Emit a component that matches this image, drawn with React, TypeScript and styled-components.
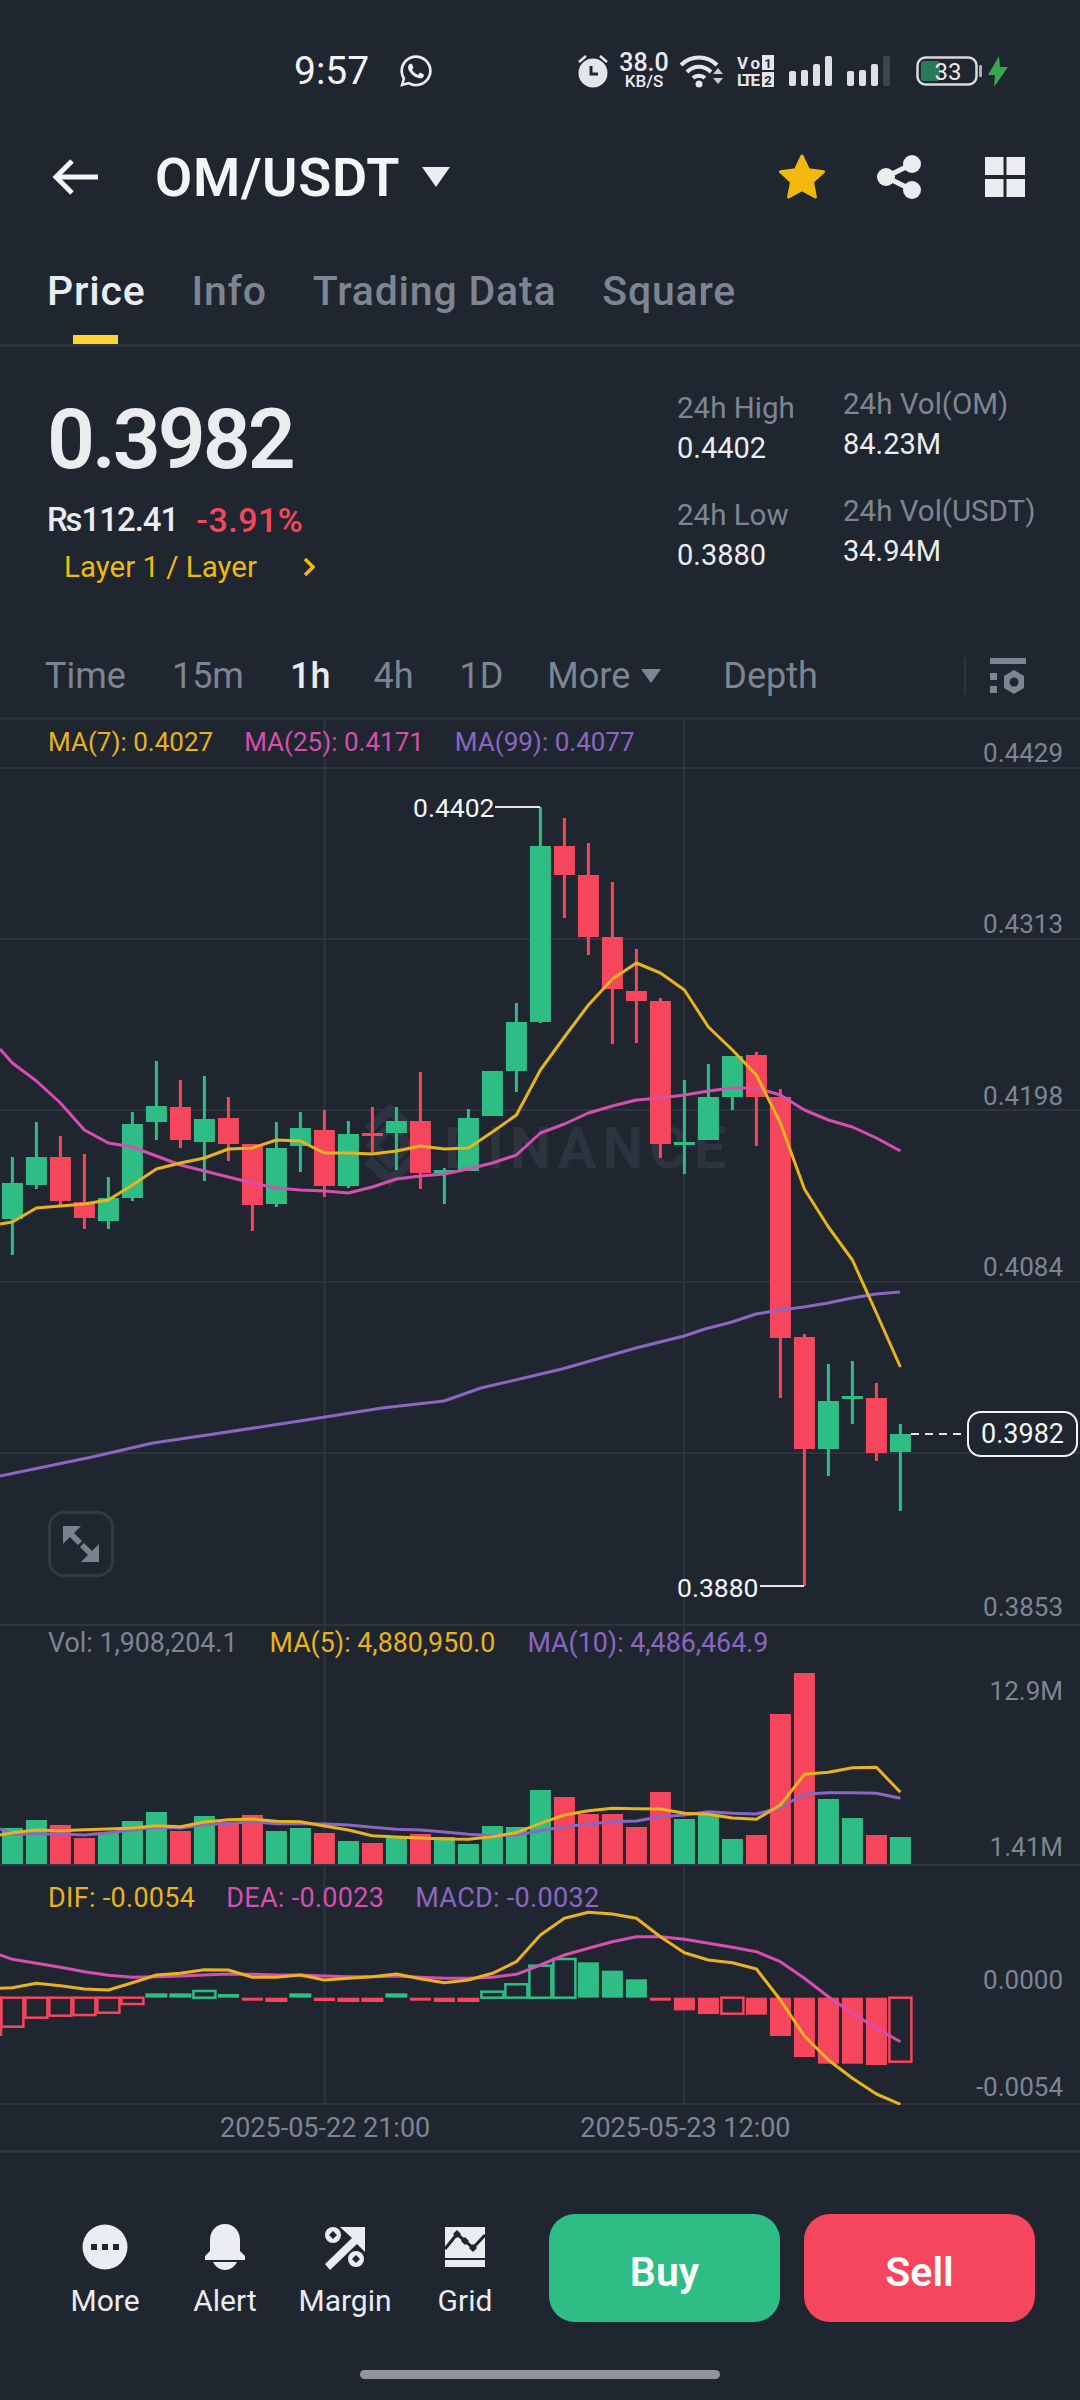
import * as React from 'react';
import styled, { createGlobalStyle } from 'styled-components';
import { FaWhatsapp } from 'react-icons/fa';

const BG = '#1f2630';
const GRID = '#2d3440';
const MUTED = '#7e8592';
const LIGHT = '#eaecef';
const GREEN = '#2ebd85';
const RED = '#f6465d';
const GOLD = '#f0b90b';
const YELLOW = '#e9b31c';
const PINK = '#d64fae';
const PURPLE = '#8b66c2';

const centerX = (i: number) => 12.4 + 24 * i;

type Candle = [number, number, number, number, 'g' | 'r'];

// high, body top, body bottom, low (page y)
const candles: Candle[] = [
  [1157, 1183, 1219, 1255, 'g'], [1122, 1157, 1185, 1189, 'g'], [1136, 1157, 1201, 1205, 'r'], [1154, 1202, 1218, 1229, 'r'],
  [1177, 1198, 1221, 1229, 'g'], [1112, 1124, 1198, 1201, 'g'], [1061, 1106, 1122, 1140, 'g'], [1080, 1107, 1140, 1148, 'r'],
  [1076, 1119, 1142, 1181, 'g'], [1097, 1118, 1144, 1161, 'r'], [1144, 1144, 1205, 1231, 'r'], [1122, 1148, 1204, 1207, 'g'],
  [1112, 1128, 1146, 1172, 'g'], [1110, 1130, 1186, 1197, 'r'], [1121, 1134, 1186, 1188, 'g'], [1107, 1133, 1136, 1154, 'r'],
  [1107, 1121, 1133, 1170, 'g'], [1072, 1121, 1173, 1189, 'r'], [1168, 1170, 1173, 1204, 'g'], [1109, 1118, 1171, 1171, 'g'],
  [1071, 1071, 1116, 1116, 'g'], [1003, 1022, 1071, 1092, 'g'], [807, 846, 1022, 1023, 'g'], [818, 846, 875, 918, 'r'],
  [843, 875, 937, 955, 'r'], [882, 937, 989, 1044, 'r'], [949, 991, 1001, 1043, 'r'], [998, 1001, 1144, 1158, 'r'],
  [1080, 1142, 1145, 1174, 'g'], [1064, 1097, 1140, 1140, 'g'], [1056, 1056, 1097, 1110, 'g'], [1052, 1055, 1097, 1146, 'r'],
  [1089, 1097, 1338, 1398, 'r'], [1334, 1337, 1449, 1586, 'r'], [1364, 1401, 1449, 1476, 'g'], [1361, 1396, 1399, 1424, 'g'],
  [1383, 1398, 1453, 1461, 'r'], [1424, 1434, 1452, 1511, 'g'],
];

const series = (first: number, ys: number[]) =>
  [`0,${first}`, ...ys.map((y, i) => `${centerX(i)},${y}`)].join(' ');

const ma7 = series(1224, [
  1222, 1208, 1206, 1204, 1200, 1185, 1169, 1163, 1158, 1149, 1148, 1140, 1141, 1153, 1153, 1154, 1151, 1146, 1149, 1148,
  1132, 1115, 1070, 1037, 1005, 979, 963, 973, 990, 1027, 1050, 1075, 1123, 1189, 1227, 1260, 1313, 1367,
]);
const ma25 = series(1049, [
  1063, 1081, 1103, 1130, 1143, 1147, 1156, 1165, 1171, 1177, 1183, 1188, 1190, 1191, 1193, 1187, 1179, 1176, 1174, 1169,
  1163, 1155, 1133, 1124, 1113, 1106, 1100, 1098, 1095, 1091, 1088, 1088, 1095, 1110, 1120, 1127, 1138, 1151,
]);
const ma99 =
  '0,1476 92,1457 153,1443 214,1434 306,1420 382,1408 444,1401 481,1388 562,1369 636,1348 684,1336 705,1329 732,1322 ' +
  '756,1314 780,1310 804,1307 828,1303 852,1298 876,1294 900,1292';

const lowerY = (z: number) => +(1620 + z / 3).toFixed(1);

const volume: [number, 'g' | 'r'][] = [
  [1828, 'g'], [1820, 'g'], [1825, 'r'], [1838, 'r'], [1833, 'g'], [1821, 'g'], [1812, 'g'], [1831, 'r'], [1816, 'g'], [1822, 'r'],
  [1815, 'r'], [1831, 'g'], [1828, 'g'], [1833, 'r'], [1841, 'g'], [1843, 'r'], [1837, 'g'], [1834, 'r'], [1837, 'g'], [1844, 'g'],
  [1826, 'g'], [1827, 'g'], [1790, 'g'], [1797, 'r'], [1814, 'r'], [1814, 'r'], [1827, 'r'], [1792, 'r'], [1819, 'g'], [1815, 'g'],
  [1839, 'g'], [1835, 'r'], [1714, 'r'], [1673, 'r'], [1799, 'g'], [1818, 'g'], [1835, 'r'], [1837, 'g'],
];

const volMa5 = series(lowerY(645), [
  638, 630, 632, 629, 627, 624, 617, 620, 606, 599, 597, 604, 605, 618, 630, 647, 651, 654, 657, 658, 650, 638, 610, 585, 572,
  565, 566, 567, 580, 583, 594, 598, 555, 463, 457, 443, 442, 517,
].map(lowerY));
const volMa10 = series(lowerY(627), [
  642, 642, 642, 645, 638, 630, 622, 624, 614, 610, 606, 611, 611, 612, 615, 622, 628, 630, 636, 643, 647, 645, 632, 620, 612,
  605, 603, 590, 585, 575, 580, 582, 562, 523, 518, 518, 520, 535,
].map(lowerY));

const ZERO = 1133;
// bar end (crop units), look: f = thin fill, w = wide fill, h = hollow
const macdBars: [number, 'f' | 'w' | 'h'][] = [
  [1220, 'h'], [1193, 'h'], [1187, 'h'], [1185, 'h'], [1178, 'h'], [1152, 'h'], [1120, 'w'], [1120, 'w'], [1113, 'h'], [1122, 'f'],
  [1141, 'f'], [1146, 'w'], [1120, 'w'], [1143, 'f'], [1146, 'w'], [1146, 'w'], [1120, 'w'], [1142, 'f'], [1146, 'f'], [1146, 'w'],
  [1115, 'h'], [1093, 'h'], [1037, 'h'], [1017, 'h'], [1027, 'f'], [1052, 'f'], [1078, 'f'], [1141, 'f'], [1171, 'f'], [1182, 'f'],
  [1181, 'h'], [1184, 'f'], [1248, 'f'], [1311, 'f'], [1331, 'f'], [1331, 'f'], [1335, 'f'], [1325, 'h'],
];
const dif = series(lowerY(1105), [
  1103, 1090, 1097, 1107, 1110, 1088, 1065, 1060, 1049, 1050, 1072, 1072, 1065, 1080, 1075, 1070, 1062, 1076, 1088, 1080, 1060,
  1025, 945, 895, 877, 882, 895, 950, 998, 1020, 1028, 1047, 1140, 1248, 1320, 1375, 1422, 1453,
].map(lowerY));
const dea = series(lowerY(1005), [
  1018, 1030, 1042, 1055, 1066, 1072, 1070, 1068, 1065, 1062, 1063, 1065, 1065, 1068, 1070, 1070, 1068, 1072, 1075, 1075, 1072,
  1063, 1035, 1005, 985, 965, 950, 950, 958, 970, 982, 995, 1025, 1075, 1130, 1180, 1225, 1265,
].map(lowerY));

const GlobalStyle = createGlobalStyle`
  html, body {
    margin: 0;
    background: ${BG};
  }
  * {
    box-sizing: border-box;
  }
`;

const Page = styled.div`
  position: relative;
  width: 1080px;
  height: 2400px;
  overflow: hidden;
  background: ${BG};
  color: ${LIGHT};
  font-family: Roboto, 'DejaVu Sans', sans-serif;
`;

const StatusBar = styled.div`
  display: flex;
  align-items: center;
  height: 110px;
  padding: 32px 0 0 294px;
`;

const Clock = styled.span`
  width: 104px;
  font-size: 39px;
  color: #f4f5f6;
`;

const StatusIcons = styled.div`
  display: flex;
  align-items: center;
  margin-left: 143px;
`;

const NetSpeed = styled.div`
  display: flex;
  flex-direction: column;
  align-items: center;
  width: 50px;
  margin: 0 10px 0 10px;
  font-weight: 500;
  color: #e9eaed;
  strong {
    font-size: 25px;
    line-height: 21px;
    font-weight: 500;
  }
  span {
    font-size: 17px;
    line-height: 17px;
  }
`;

const Header = styled.header`
  display: flex;
  align-items: center;
  height: 134px;
  padding: 0 55px 0 52px;
`;

const Title = styled.h1`
  margin: 0 22px 0 57px;
  font-size: 54px;
  letter-spacing: 0.7px;
  font-weight: 600;
  color: #f4f5f6;
`;

const Caret = styled.i<{ $size: number; $color: string }>`
  display: block;
  width: 0;
  height: 0;
  border-style: solid;
  border-width: ${(p) => p.$size * 1.45}px ${(p) => p.$size}px 0;
  border-color: ${(p) => p.$color} transparent transparent;
`;

const HeaderActions = styled.div`
  display: flex;
  align-items: center;
  gap: 51px;
  margin-left: auto;
`;

const LayoutSlot = styled.div`
  display: flex;
  margin-left: 12px;
`;

const Tabs = styled.nav`
  display: flex;
  gap: 46px;
  height: 103px;
  padding: 24px 0 0 47px;
  border-bottom: 3px solid ${GRID};
`;

const Tab = styled.span<{ $active?: boolean }>`
  position: relative;
  height: 46px;
  font-size: 41px;
  letter-spacing: 0.8px;
  line-height: 46px;
  font-weight: 500;
  color: ${(p) => (p.$active ? LIGHT : MUTED)};
  ${(p) =>
    p.$active &&
    `&::after {
      content: '';
      position: absolute;
      left: 50%;
      top: 67px;
      width: 45px;
      height: 9px;
      margin-left: -23px;
      background: #fcd535;
    }`}
`;

const Ticker = styled.section`
  display: flex;
  height: 293px;
`;

const PriceBlock = styled.div`
  width: 677px;
  padding: 48px 0 0 47px;
`;

const LastPrice = styled.div`
  font-size: 84px;
  letter-spacing: -3px;
  line-height: 90px;
  font-weight: 600;
  color: ${LIGHT};
`;

const SubPrice = styled.div`
  display: flex;
  gap: 18px;
  margin-top: 13px;
  font-size: 33px;
  letter-spacing: -1px;
  line-height: 44px;
  font-weight: 500;
`;

const Change = styled.span`
  font-size: 34px;
  letter-spacing: 0.5px;
  color: ${RED};
`;

const Sector = styled.div`
  display: flex;
  align-items: center;
  gap: 46px;
  margin: 5px 0 0 17px;
  font-size: 29.5px;
  line-height: 40px;
  color: ${GOLD};
`;

const StatColumn = styled.div<{ $top: number; $width: number }>`
  width: ${(p) => p.$width}px;
  padding-top: ${(p) => p.$top}px;
`;

const StatLabel = styled.div`
  font-size: 29.5px;
  line-height: 40px;
  white-space: nowrap;
  color: ${MUTED};
`;

const StatValue = styled.div`
  margin: 1px 0 28px;
  font-size: 29px;
  line-height: 38px;
  color: ${LIGHT};
`;

const Intervals = styled.div`
  display: flex;
  align-items: center;
  height: 80px;
  padding: 0 0 6px 45px;
  border-bottom: 3px solid #2a313c;
`;

const Interval = styled.span<{ $active?: boolean; $gap: number; $lead?: number }>`
  margin: 0 ${(p) => p.$gap}px 0 ${(p) => p.$lead ?? 0}px;
  font-size: 36px;
  font-weight: ${(p) => (p.$active ? 500 : 400)};
  color: ${(p) => (p.$active ? LIGHT : MUTED)};
`;

const SettingsSlot = styled.div`
  display: flex;
  align-items: center;
  gap: 24px;
  margin-left: auto;
  padding-right: 54px;
  &::before {
    content: '';
    width: 2px;
    height: 36px;
    background: ${GRID};
  }
`;

const Pane = styled.div<{ $height: number }>`
  position: relative;
  height: ${(p) => p.$height}px;
  svg {
    display: block;
  }
`;

const Legend = styled.div<{ $top: number; $gap: number; $size: number; $tracking?: number }>`
  position: absolute;
  top: ${(p) => p.$top}px;
  left: 48px;
  display: flex;
  gap: ${(p) => p.$gap}px;
  font-size: ${(p) => p.$size}px;
  letter-spacing: ${(p) => p.$tracking ?? 0}px;
  line-height: 30px;
  white-space: nowrap;
`;

const LegendItem = styled.span<{ $color: string }>`
  color: ${(p) => p.$color};
`;

const PriceTag = styled.div`
  position: absolute;
  left: 967px;
  top: 691px;
  width: 111px;
  height: 46px;
  border: 2px solid #f1f2f4;
  border-radius: 14px;
  background: ${BG};
  font-size: 27px;
  line-height: 42px;
  text-align: center;
  color: #f4f5f6;
`;

const ExpandButton = styled.div`
  position: absolute;
  left: 48px;
  top: 791px;
  display: flex;
  align-items: center;
  justify-content: center;
  width: 66px;
  height: 66px;
  border: 3px solid #323945;
  border-radius: 16px;
`;

const DateAxis = styled.div`
  display: flex;
  gap: 150px;
  height: 48px;
  padding: 6px 0 0 220px;
  border-bottom: 3px solid ${GRID};
  font-size: 27px;
  line-height: 34px;
  color: ${MUTED};
`;

const Footer = styled.footer`
  display: flex;
  flex-direction: column;
  align-items: center;
  height: 247px;
  padding-top: 61px;
`;

const Toolbar = styled.div`
  display: flex;
  align-self: stretch;
  height: 108px;
  padding-left: 45px;
`;

const Tool = styled.div`
  display: flex;
  flex-direction: column;
  align-items: center;
  width: 120px;
  padding-top: 10px;
  font-size: 30px;
  line-height: 40px;
  color: ${LIGHT};
  svg {
    display: block;
    height: 46px;
    margin-bottom: 11px;
  }
`;

const TradeButton = styled.div<{ $color: string }>`
  display: flex;
  align-items: center;
  justify-content: center;
  width: 231px;
  margin-left: 24px;
  padding-top: 7px;
  border-radius: 26px;
  background: ${(p) => p.$color};
  font-size: 41px;
  font-weight: 600;
  color: #fff;
`;

const HomePill = styled.div`
  width: 360px;
  height: 9px;
  margin-top: 48px;
  border-radius: 5px;
  background: #91949c;
`;

const PriceLine = ({ points, color }: { points: string; color: string }) => (
  <polyline points={points} fill="none" stroke={color} strokeWidth={3} strokeLinejoin="round" />
);

const AxisLabel = ({ y, children }: { y: number; children: string }) => (
  <text x={1063} y={y + 9} textAnchor="end" fontFamily="Roboto, sans-serif" fontSize={26} fill={MUTED}>
    {children}
  </text>
);

const GridLines = ({ top, bottom, rows }: { top: number; bottom: number; rows: number[] }) => (
  <g fill={GRID}>
    {rows.map((y) => (
      <rect key={y} x={0} y={y - 1} width={1080} height={2} />
    ))}
    <rect x={323.5} y={top} width={2} height={bottom - top} />
    <rect x={683} y={top} width={2} height={bottom - top} />
  </g>
);

const Watermark = () => (
  <g fill="#2d333f">
    <g fill="none" stroke="#2d333f" strokeWidth={10}>
      <path d="M372 1145l18 -18 18 18 -18 18z" />
      <path d="M368 1130l22 -20 22 20" />
      <path d="M368 1160l22 20 22 -20" />
    </g>
    <text x={444} y={1168} fontFamily="Roboto, sans-serif" fontWeight={700} fontSize={58} textLength={282}>
      BINANCE
    </text>
  </g>
);

const Candles = () => (
  <g>
    {candles.map(([high, top, bottom, low, dir], i) => {
      const color = dir === 'g' ? GREEN : RED;
      const x = centerX(i);
      return (
        <g key={i} fill={color}>
          <rect x={x - 1.5} y={high} width={3} height={low - high} />
          <rect x={x - 10.5} y={top} width={21} height={bottom - top} />
        </g>
      );
    })}
  </g>
);

const PriceChart = () => (
  <svg width={1080} height={906} viewBox="0 720 1080 906">
    <Watermark />
    <GridLines top={720} bottom={1626} rows={[768, 939, 1110, 1282, 1453, 1625]} />
    <Candles />
    <PriceLine points={ma99} color={PURPLE} />
    <PriceLine points={ma25} color={PINK} />
    <PriceLine points={ma7} color={YELLOW} />
    <AxisLabel y={753}>0.4429</AxisLabel>
    <AxisLabel y={924}>0.4313</AxisLabel>
    <AxisLabel y={1096}>0.4198</AxisLabel>
    <AxisLabel y={1267}>0.4084</AxisLabel>
    <AxisLabel y={1607}>0.3853</AxisLabel>
    <g fontFamily="Roboto, sans-serif" fontSize={26.5} fill="#f4f5f6">
      <text x={413} y={817}>0.4402</text>
      <text x={677} y={1597}>0.3880</text>
    </g>
    <g stroke="#e4e6ea" strokeWidth={2} fill="none">
      <path d="M495 807H540" />
      <path d="M760 1586H804" />
      <path d="M911 1434H965" strokeDasharray="8 6" />
    </g>
  </svg>
);

const VolumeChart = () => (
  <svg width={1080} height={240} viewBox="0 1626 1080 240">
    <GridLines top={1626} bottom={1866} rows={[1865]} />
    {volume.map(([top, dir], i) => (
      <rect key={i} x={centerX(i) - 10.5} y={top} width={21} height={1864 - top} fill={dir === 'g' ? GREEN : RED} />
    ))}
    <PriceLine points={volMa10} color={PURPLE} />
    <PriceLine points={volMa5} color={YELLOW} />
    <AxisLabel y={1691}>12.9M</AxisLabel>
    <AxisLabel y={1847}>1.41M</AxisLabel>
  </svg>
);

const MacdChart = () => (
  <svg width={1080} height={239} viewBox="0 1866 1080 239">
    <GridLines top={1866} bottom={2105} rows={[2104]} />
    {macdBars.map(([end, look], i) => {
      const color = end < ZERO ? GREEN : RED;
      const y = lowerY(Math.min(end, ZERO));
      const h = Math.abs(end - ZERO) / 3;
      const w = look === 'f' ? 21 : 22;
      return look === 'h' ? (
        <rect key={i} x={centerX(i) - 11} y={y} width={w} height={Math.max(h, 3)} fill="none" stroke={color} strokeWidth={2.5} />
      ) : (
        <rect key={i} x={centerX(i) - w / 2} y={y} width={w} height={Math.max(h, 3)} fill={color} />
      );
    })}
    <rect x={-10} y={lowerY(ZERO)} width={11} height={37} fill="none" stroke={RED} strokeWidth={2.5} />
    <PriceLine points={dea} color={PINK} />
    <PriceLine points={dif} color={YELLOW} />
    <AxisLabel y={1980}>0.0000</AxisLabel>
    <AxisLabel y={2087}>-0.0054</AxisLabel>
  </svg>
);

const AlarmIcon = () => (
  <svg width={32} height={34} viewBox="0 0 32 34">
    <circle cx={16} cy={19} r={14.5} fill="#e4e5e8" />
    <path d="M14 12v8h7" fill="none" stroke={BG} strokeWidth={3} />
    <path d="M2 8l7-6M30 8l-7-6" stroke="#e4e5e8" strokeWidth={2.5} />
  </svg>
);

const WifiIcon = () => (
  <svg width={46} height={34} viewBox="0 0 46 34">
    <g fill="none" stroke="#e4e5e8" strokeWidth={4}>
      <path d="M2 11C12 1 28 1 38 11" />
      <path d="M8 18C15 11 25 11 32 18" />
      <path d="M14 24C17 21 23 21 26 24" />
    </g>
    <circle cx={20} cy={30} r={3.5} fill="#e4e5e8" />
    <path d="M34 20l5-6 5 6zM34 24l5 6 5-6z" fill="#c9cbd0" />
  </svg>
);

const VolteIcon = () => (
  <svg width={37} height={38} viewBox="0 -3 37 38" style={{ marginLeft: 12 }}>
    <g fontFamily="Roboto, sans-serif" fontWeight={700} fontSize={17} fill="#e4e5e8">
      <text x={0} y={14} textLength={23}>Vo</text>
      <text x={0} y={31} textLength={23}>LTE</text>
    </g>
    <rect x={25} y={0} width={12} height={15} fill="#e4e5e8" />
    <rect x={25} y={17} width={12} height={15} fill="#e4e5e8" />
    <g fontFamily="Roboto, sans-serif" fontWeight={700} fontSize={13} fill={BG} textAnchor="middle">
      <text x={31} y={13}>1</text>
      <text x={31} y={30}>2</text>
    </g>
  </svg>
);

const SignalIcon = ({ dim }: { dim?: boolean }) => (
  <svg width={43} height={30} viewBox="0 0 43 30" style={{ marginLeft: 15 }}>
    {[15, 16, 22, 30].map((h, i) => (
      <rect key={i} x={i * 12} y={30 - h} width={7} height={h} rx={2} fill={dim && i === 3 ? '#3d4450' : '#dfe0e3'} />
    ))}
  </svg>
);

const BatteryIcon = () => (
  <svg width={66} height={30} viewBox="0 0 66 30" style={{ marginLeft: 26 }}>
    <rect x={1.5} y={1.5} width={59} height={27} rx={8} fill="none" stroke="#d8dade" strokeWidth={2.5} />
    <rect x={5} y={5} width={19} height={20} rx={3} fill="#2b7a57" />
    <rect x={63} y={9} width={3} height={12} rx={1} fill="#a9acb2" />
    <text x={32} y={24} textAnchor="middle" fontFamily="Roboto, sans-serif" fontSize={24} fill="#e8e9ec">33</text>
  </svg>
);

const BoltIcon = () => (
  <svg width={20} height={31} viewBox="0 0 20 31" style={{ marginLeft: 6 }}>
    <path d="M11 0L0 19h7l-1 12L20 11h-8z" fill="#36a852" />
  </svg>
);

const BackIcon = () => (
  <svg width={46} height={36} viewBox="0 0 46 36" fill="none" stroke="#f4f5f6" strokeWidth={5}>
    <path d="M46 18H5" />
    <path d="M20 2L4 18l16 16" />
  </svg>
);

const StarIcon = () => (
  <svg width={46} height={46} viewBox="0 0 46 46">
    <path
      d="M23 2l6.6 13.8 14.9 1.9-11 10.3 2.9 15L23 35.6 9.6 43l2.9-15-11-10.3 14.9-1.9z"
      fill={GOLD}
      stroke={GOLD}
      strokeWidth={3}
      strokeLinejoin="round"
    />
  </svg>
);

const ShareIcon = () => (
  <svg width={46} height={46} viewBox="0 0 46 46" fill={LIGHT} stroke={LIGHT}>
    <path d="M36 10L10 23l26 13" fill="none" strokeWidth={5} />
    <circle cx={36} cy={10} r={9} stroke="none" />
    <circle cx={10} cy={23} r={9} stroke="none" />
    <circle cx={36} cy={36} r={9} stroke="none" />
  </svg>
);

const LayoutIcon = () => (
  <svg width={40} height={40} viewBox="0 0 40 40" fill={LIGHT}>
    <rect width={18.5} height={18} />
    <rect x={21.5} width={18.5} height={18} />
    <rect y={22} width={18.5} height={18} />
    <rect x={21.5} y={22} width={18.5} height={18} />
  </svg>
);

const ChevronIcon = () => (
  <svg width={12} height={18} viewBox="0 0 12 18" fill="none" stroke={GOLD} strokeWidth={3.5}>
    <path d="M2 1l8 8-8 8" />
  </svg>
);

const ChartSettingsIcon = () => (
  <svg width={36} height={36} viewBox="0 0 36 36" fill={MUTED}>
    <rect width={36} height={6} />
    <rect y={15} width={7} height={7} />
    <rect y={28} width={7} height={7} />
    <path d="M24 12l10 6v12l-10 6-10-6V18z" />
    <circle cx={24} cy={24} r={4.5} fill={BG} />
  </svg>
);

const ExpandIcon = () => (
  <svg width={36} height={36} viewBox="0 0 36 36" fill="#7b828f">
    <path d="M0 0h18L0 18z" />
    <path d="M36 36H18l18-18z" />
    <path d="M9 5l10 10-4 4L5 9zM21 17l10 10-4 4-10-10z" />
  </svg>
);

const MoreIcon = () => (
  <svg width={46} viewBox="0 0 46 46">
    <circle cx={23} cy={23} r={22.5} fill={LIGHT} />
    <g fill={BG}>
      <rect x={9} y={20} width={6} height={6} />
      <rect x={20} y={20} width={6} height={6} />
      <rect x={31} y={20} width={6} height={6} />
    </g>
  </svg>
);

const BellIcon = () => (
  <svg width={40} viewBox="0 0 40 46" fill={LIGHT}>
    <path d="M20 0c9 0 15 7 15 16v11l5 5v4H0v-4l5-5V16C5 7 11 0 20 0z" />
    <path d="M8 38h24c-2 4-6 8-12 8S10 42 8 38z" />
  </svg>
);

const MarginIcon = () => (
  <svg width={40} height={46} viewBox="0 0 40 46" fill={LIGHT}>
    <path d="M15 3h25v25l-8-8L5 46l-5-6 27-26z" />
    <circle cx={8} cy={11} r={8} />
    <circle cx={31} cy={35} r={8} />
    <path d="M8 7l4 4-4 4-4-4zM31 31l4 4-4 4-4-4z" fill={BG} />
  </svg>
);

const GridBotIcon = () => (
  <svg width={40} height={46} viewBox="0 0 40 46" fill={LIGHT}>
    <rect y={3} width={40} height={31} />
    <rect y={36} width={40} height={7} />
    <path d="M0 25L12 10l16 14L40 11" fill="none" stroke={BG} strokeWidth={3} />
    <path d="M12 6l4 4-4 4-4-4zM20 13l4 4-4 4-4-4zM28 20l4 4-4 4-4-4z" fill={BG} />
  </svg>
);

export default function App() {
  return (
    <Page>
      <GlobalStyle />
      <StatusBar>
        <Clock>9:57</Clock>
        <FaWhatsapp size={36} color="#eceef0" />
        <StatusIcons>
          <AlarmIcon />
          <NetSpeed>
            <strong>38.0</strong>
            <span>KB/S</span>
          </NetSpeed>
          <WifiIcon />
          <VolteIcon />
          <SignalIcon />
          <SignalIcon dim />
          <BatteryIcon />
          <BoltIcon />
        </StatusIcons>
      </StatusBar>

      <Header>
        <BackIcon />
        <Title>OM/USDT</Title>
        <Caret $size={14} $color={LIGHT} />
        <HeaderActions>
          <StarIcon />
          <ShareIcon />
          <LayoutSlot>
            <LayoutIcon />
          </LayoutSlot>
        </HeaderActions>
      </Header>

      <Tabs>
        <Tab $active>Price</Tab>
        <Tab>Info</Tab>
        <Tab>Trading Data</Tab>
        <Tab>Square</Tab>
      </Tabs>

      <Ticker>
        <PriceBlock>
          <LastPrice>0.3982</LastPrice>
          <SubPrice>
            <span>₨112.41</span>
            <Change>-3.91%</Change>
          </SubPrice>
          <Sector>
            <span>Layer 1 / Layer</span>
            <ChevronIcon />
          </Sector>
        </PriceBlock>
        <StatColumn $top={41} $width={166}>
          <StatLabel>24h High</StatLabel>
          <StatValue>0.4402</StatValue>
          <StatLabel>24h Low</StatLabel>
          <StatValue>0.3880</StatValue>
        </StatColumn>
        <StatColumn $top={37} $width={236}>
          <StatLabel>24h Vol(OM)</StatLabel>
          <StatValue>84.23M</StatValue>
          <StatLabel>24h Vol(USDT)</StatLabel>
          <StatValue>34.94M</StatValue>
        </StatColumn>
      </Ticker>

      <Intervals>
        <Interval $gap={46}>Time</Interval>
        <Interval $gap={46}>15m</Interval>
        <Interval $active $gap={43}>1h</Interval>
        <Interval $gap={46}>4h</Interval>
        <Interval $gap={44}>1D</Interval>
        <Interval $gap={11}>More</Interval>
        <Caret $size={10} $color={MUTED} />
        <Interval $gap={0} $lead={62}>Depth</Interval>
        <SettingsSlot>
          <ChartSettingsIcon />
        </SettingsSlot>
      </Intervals>

      <Pane $height={906}>
        <PriceChart />
        <Legend $top={7} $gap={31} $size={26}>
          <LegendItem $color={YELLOW}>MA(7): 0.4027</LegendItem>
          <LegendItem $color={PINK}>MA(25): 0.4171</LegendItem>
          <LegendItem $color={PURPLE}>MA(99): 0.4077</LegendItem>
        </Legend>
        <PriceTag>0.3982</PriceTag>
        <ExpandButton>
          <ExpandIcon />
        </ExpandButton>
      </Pane>

      <Pane $height={240}>
        <VolumeChart />
        <Legend $top={2} $gap={32} $size={26.8}>
          <LegendItem $color={MUTED}>Vol: 1,908,204.1</LegendItem>
          <LegendItem $color={YELLOW}>MA(5): 4,880,950.0</LegendItem>
          <LegendItem $color={PURPLE}>MA(10): 4,486,464.9</LegendItem>
        </Legend>
      </Pane>

      <Pane $height={239}>
        <MacdChart />
        <Legend $top={17} $gap={31} $size={27} $tracking={0.3}>
          <LegendItem $color={YELLOW}>DIF: -0.0054</LegendItem>
          <LegendItem $color={PINK}>DEA: -0.0023</LegendItem>
          <LegendItem $color={PURPLE}>MACD: -0.0032</LegendItem>
        </Legend>
      </Pane>

      <DateAxis>
        <span>2025-05-22 21:00</span>
        <span>2025-05-23 12:00</span>
      </DateAxis>

      <Footer>
        <Toolbar>
          <Tool>
            <MoreIcon />
            More
          </Tool>
          <Tool>
            <BellIcon />
            Alert
          </Tool>
          <Tool>
            <MarginIcon />
            Margin
          </Tool>
          <Tool>
            <GridBotIcon />
            Grid
          </Tool>
          <TradeButton $color={GREEN}>Buy</TradeButton>
          <TradeButton $color={RED}>Sell</TradeButton>
        </Toolbar>
        <HomePill />
      </Footer>
    </Page>
  );
}
